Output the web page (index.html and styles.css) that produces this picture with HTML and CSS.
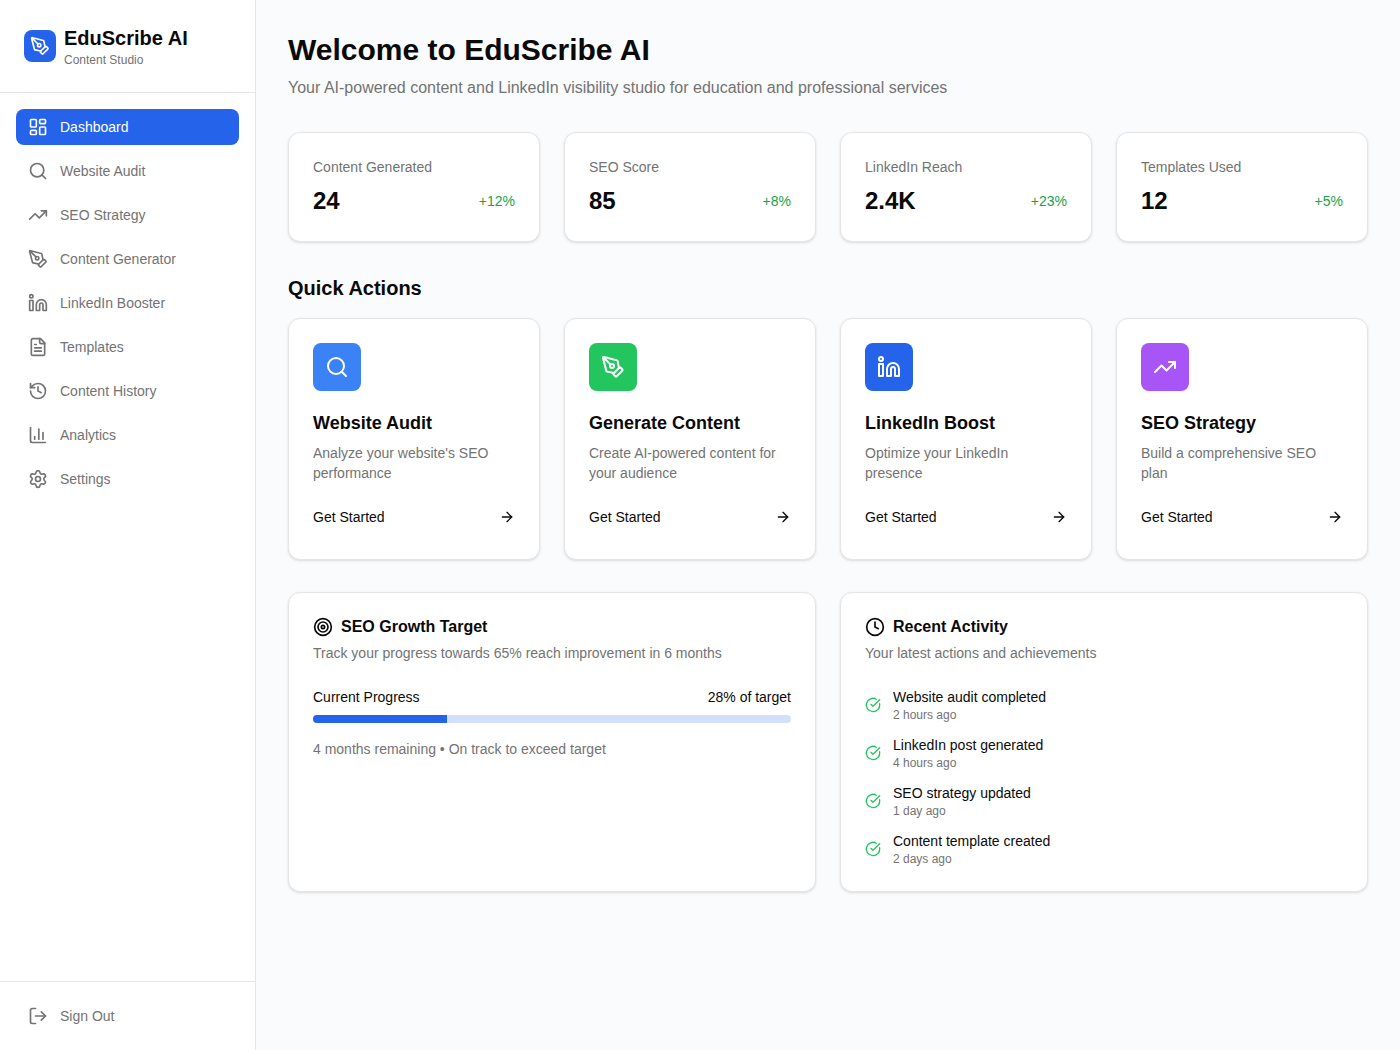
FILE: index.html
```
<!DOCTYPE html>
<html lang="en">
<head>
    <meta charset="UTF-8">
    <meta name="viewport" content="width=device-width, initial-scale=1.0">
    <title>EduScribe AI</title>
    <link rel="stylesheet" href="styles.css">
</head>
<body>

    <!-- Icons used more than once -->
    <svg class="sprite" aria-hidden="true">
        <symbol id="pen" viewBox="0 0 24 24">
            <path d="M15.707 21.293a1 1 0 0 1-1.414 0l-1.586-1.586a1 1 0 0 1 0-1.414l5.586-5.586a1 1 0 0 1 1.414 0l1.586 1.586a1 1 0 0 1 0 1.414z"/>
            <path d="m18 13-1.375-6.874a1 1 0 0 0-.746-.776L3.235 2.028a1 1 0 0 0-1.207 1.207L5.35 15.879a1 1 0 0 0 .776.746L13 18"/>
            <path d="m2.3 2.3 7.286 7.286"/>
            <circle cx="11" cy="11" r="2"/>
        </symbol>
        <symbol id="search" viewBox="0 0 24 24">
            <circle cx="11" cy="11" r="8"/>
            <path d="m21 21-4.3-4.3"/>
        </symbol>
        <symbol id="trending" viewBox="0 0 24 24">
            <path d="M16 7h6v6"/>
            <path d="m22 7-8.5 8.5-5-5L2 17"/>
        </symbol>
        <symbol id="linkedin" viewBox="0 0 24 24">
            <path d="M16 8a6 6 0 0 1 6 6v7h-4v-7a2 2 0 0 0-2-2 2 2 0 0 0-2 2v7h-4v-7a6 6 0 0 1 6-6z"/>
            <rect x="2" y="9" width="4" height="12"/>
            <circle cx="4" cy="4" r="2"/>
        </symbol>
        <symbol id="arrow" viewBox="0 0 24 24">
            <path d="M5 12h14"/>
            <path d="m12 5 7 7-7 7"/>
        </symbol>
        <symbol id="check" viewBox="0 0 24 24">
            <path d="M21.801 10A10 10 0 1 1 17 3.335"/>
            <path d="m9 11 3 3L22 4"/>
        </symbol>
    </svg>

    <div class="layout">
        <!-- Sidebar -->
        <aside class="sidebar">
            <div class="brand">
                <div class="brand-logo">
                    <svg class="icon"><use href="#pen"/></svg>
                </div>
                <div>
                    <div class="brand-name">EduScribe AI</div>
                    <div class="brand-sub">Content Studio</div>
                </div>
            </div>

            <nav class="nav">
                <a href="#" class="nav-item active">
                    <svg class="icon" viewBox="0 0 24 24">
                        <rect x="3" y="3" width="7" height="9" rx="1"/>
                        <rect x="14" y="3" width="7" height="5" rx="1"/>
                        <rect x="14" y="12" width="7" height="9" rx="1"/>
                        <rect x="3" y="16" width="7" height="5" rx="1"/>
                    </svg>
                    Dashboard
                </a>
                <a href="#" class="nav-item">
                    <svg class="icon"><use href="#search"/></svg>
                    Website Audit
                </a>
                <a href="#" class="nav-item">
                    <svg class="icon"><use href="#trending"/></svg>
                    SEO Strategy
                </a>
                <a href="#" class="nav-item">
                    <svg class="icon"><use href="#pen"/></svg>
                    Content Generator
                </a>
                <a href="#" class="nav-item">
                    <svg class="icon"><use href="#linkedin"/></svg>
                    LinkedIn Booster
                </a>
                <a href="#" class="nav-item">
                    <svg class="icon" viewBox="0 0 24 24">
                        <path d="M15 2H6a2 2 0 0 0-2 2v16a2 2 0 0 0 2 2h12a2 2 0 0 0 2-2V7Z"/>
                        <path d="M14 2v4a2 2 0 0 0 2 2h4"/>
                        <path d="M10 9H8"/>
                        <path d="M16 13H8"/>
                        <path d="M16 17H8"/>
                    </svg>
                    Templates
                </a>
                <a href="#" class="nav-item">
                    <svg class="icon" viewBox="0 0 24 24">
                        <path d="M3 12a9 9 0 1 0 9-9 9.75 9.75 0 0 0-6.74 2.74L3 8"/>
                        <path d="M3 3v5h5"/>
                        <path d="M12 7v5l4 2"/>
                    </svg>
                    Content History
                </a>
                <a href="#" class="nav-item">
                    <svg class="icon" viewBox="0 0 24 24">
                        <path d="M3 3v16a2 2 0 0 0 2 2h16"/>
                        <path d="M18 17V9"/>
                        <path d="M13 17V5"/>
                        <path d="M8 17v-3"/>
                    </svg>
                    Analytics
                </a>
                <a href="#" class="nav-item">
                    <svg class="icon" viewBox="0 0 24 24">
                        <path d="M9.671 4.136a2.34 2.34 0 0 1 4.659 0 2.34 2.34 0 0 0 3.319 1.915 2.34 2.34 0 0 1 2.33 4.033 2.34 2.34 0 0 0 0 3.831 2.34 2.34 0 0 1-2.33 4.033 2.34 2.34 0 0 0-3.319 1.915 2.34 2.34 0 0 1-4.659 0 2.34 2.34 0 0 0-3.32-1.915 2.34 2.34 0 0 1-2.33-4.033 2.34 2.34 0 0 0 0-3.831A2.34 2.34 0 0 1 6.35 6.051a2.34 2.34 0 0 0 3.319-1.915"/>
                        <circle cx="12" cy="12" r="3"/>
                    </svg>
                    Settings
                </a>
            </nav>

            <div class="sidebar-footer">
                <button type="button" class="nav-item">
                    <svg class="icon" viewBox="0 0 24 24">
                        <path d="m16 17 5-5-5-5"/>
                        <path d="M21 12H9"/>
                        <path d="M9 21H5a2 2 0 0 1-2-2V5a2 2 0 0 1 2-2h4"/>
                    </svg>
                    Sign Out
                </button>
            </div>
        </aside>

        <main class="main">
            <header>
                <h1>Welcome to EduScribe AI</h1>
                <p class="lead">Your AI-powered content and LinkedIn visibility studio for education and professional services</p>
            </header>

            <!-- Stats -->
            <section class="grid-4">
                <div class="card">
                    <p class="muted">Content Generated</p>
                    <div class="stat-row">
                        <span class="stat-value">24</span>
                        <span class="stat-change">+12%</span>
                    </div>
                </div>
                <div class="card">
                    <p class="muted">SEO Score</p>
                    <div class="stat-row">
                        <span class="stat-value">85</span>
                        <span class="stat-change">+8%</span>
                    </div>
                </div>
                <div class="card">
                    <p class="muted">LinkedIn Reach</p>
                    <div class="stat-row">
                        <span class="stat-value">2.4K</span>
                        <span class="stat-change">+23%</span>
                    </div>
                </div>
                <div class="card">
                    <p class="muted">Templates Used</p>
                    <div class="stat-row">
                        <span class="stat-value">12</span>
                        <span class="stat-change">+5%</span>
                    </div>
                </div>
            </section>

            <!-- Quick Actions -->
            <section>
                <h2>Quick Actions</h2>
                <div class="grid-4">
                    <div class="card">
                        <div class="action-icon blue">
                            <svg class="icon"><use href="#search"/></svg>
                        </div>
                        <h3 class="action-title">Website Audit</h3>
                        <p class="muted">Analyze your website's SEO performance</p>
                        <button type="button" class="btn-start">
                            Get Started
                            <svg class="icon"><use href="#arrow"/></svg>
                        </button>
                    </div>
                    <div class="card">
                        <div class="action-icon green">
                            <svg class="icon"><use href="#pen"/></svg>
                        </div>
                        <h3 class="action-title">Generate Content</h3>
                        <p class="muted">Create AI-powered content for your audience</p>
                        <button type="button" class="btn-start">
                            Get Started
                            <svg class="icon"><use href="#arrow"/></svg>
                        </button>
                    </div>
                    <div class="card">
                        <div class="action-icon navy">
                            <svg class="icon"><use href="#linkedin"/></svg>
                        </div>
                        <h3 class="action-title">LinkedIn Boost</h3>
                        <p class="muted">Optimize your LinkedIn presence</p>
                        <button type="button" class="btn-start">
                            Get Started
                            <svg class="icon"><use href="#arrow"/></svg>
                        </button>
                    </div>
                    <div class="card">
                        <div class="action-icon purple">
                            <svg class="icon"><use href="#trending"/></svg>
                        </div>
                        <h3 class="action-title">SEO Strategy</h3>
                        <p class="muted">Build a comprehensive SEO plan</p>
                        <button type="button" class="btn-start">
                            Get Started
                            <svg class="icon"><use href="#arrow"/></svg>
                        </button>
                    </div>
                </div>
            </section>

            <section class="grid-2">
                <!-- Growth target -->
                <div class="card">
                    <h3 class="panel-title">
                        <svg class="icon" viewBox="0 0 24 24">
                            <circle cx="12" cy="12" r="10"/>
                            <circle cx="12" cy="12" r="6"/>
                            <circle cx="12" cy="12" r="2"/>
                        </svg>
                        SEO Growth Target
                    </h3>
                    <p class="muted">Track your progress towards 65% reach improvement in 6 months</p>
                    <div class="panel-body">
                        <div class="progress-row">
                            <label for="growth">Current Progress</label>
                            <span>28% of target</span>
                        </div>
                        <progress id="growth" value="28" max="100"></progress>
                        <p class="muted">4 months remaining • On track to exceed target</p>
                    </div>
                </div>

                <!-- Recent activity -->
                <div class="card">
                    <h3 class="panel-title">
                        <svg class="icon" viewBox="0 0 24 24">
                            <circle cx="12" cy="12" r="10"/>
                            <path d="M12 6v6l4 2"/>
                        </svg>
                        Recent Activity
                    </h3>
                    <p class="muted">Your latest actions and achievements</p>
                    <ul class="panel-body activity">
                        <li>
                            <svg class="icon"><use href="#check"/></svg>
                            <div>
                                <p>Website audit completed</p>
                                <p class="time">2 hours ago</p>
                            </div>
                        </li>
                        <li>
                            <svg class="icon"><use href="#check"/></svg>
                            <div>
                                <p>LinkedIn post generated</p>
                                <p class="time">4 hours ago</p>
                            </div>
                        </li>
                        <li>
                            <svg class="icon"><use href="#check"/></svg>
                            <div>
                                <p>SEO strategy updated</p>
                                <p class="time">1 day ago</p>
                            </div>
                        </li>
                        <li>
                            <svg class="icon"><use href="#check"/></svg>
                            <div>
                                <p>Content template created</p>
                                <p class="time">2 days ago</p>
                            </div>
                        </li>
                    </ul>
                </div>
            </section>
        </main>
    </div>

</body>
</html>
```
FILE: styles.css
```
* {
    box-sizing: border-box;
    margin: 0;
    padding: 0;
}
body {
    font-family: "Liberation Sans", Arial, sans-serif;
    font-size: 14px;
    line-height: 20px;
    color: #0a0a0a;
    background-color: #fafbfd;
}
button {
    font: inherit;
    background: none;
    border: none;
    cursor: pointer;
}
.sprite {
    display: none;
}
.icon {
    width: 20px;
    height: 20px;
    flex-shrink: 0;
    fill: none;
    stroke: currentColor;
    stroke-width: 2;
    stroke-linecap: round;
    stroke-linejoin: round;
}
.layout {
    display: flex;
    min-height: 100vh;
}

/* Sidebar */
.sidebar {
    width: 256px;
    flex-shrink: 0;
    display: flex;
    flex-direction: column;
    background-color: #fff;
    border-right: 1px solid #e5e5e5;
}
.brand {
    display: flex;
    align-items: center;
    gap: 8px;
    padding: 24px;
    border-bottom: 1px solid #e5e5e5;
}
.brand-logo {
    width: 32px;
    height: 32px;
    display: flex;
    align-items: center;
    justify-content: center;
    color: #fff;
    background-color: #2563eb;
    border-radius: 8px;
}
.brand-name {
    font-size: 20px;
    line-height: 28px;
    font-weight: bold;
}
.brand-sub {
    font-size: 12px;
    line-height: 16px;
    color: #737373;
}
.nav {
    flex: 1;
    display: flex;
    flex-direction: column;
    gap: 8px;
    padding: 16px;
}
.nav-item {
    width: 100%;
    display: flex;
    align-items: center;
    gap: 12px;
    padding: 8px 12px;
    color: #737373;
    text-decoration: none;
    border-radius: 8px;
}
.nav-item.active {
    color: #fff;
    background-color: #2563eb;
}
.sidebar-footer {
    padding: 16px;
    border-top: 1px solid #e5e5e5;
}

/* Main */
.main {
    flex: 1;
    min-width: 0;
    display: flex;
    flex-direction: column;
    gap: 32px;
    padding: 32px;
}
h1 {
    font-size: 30px;
    line-height: 36px;
    margin-bottom: 8px;
}
h2 {
    font-size: 20px;
    line-height: 28px;
    margin-bottom: 16px;
}
.lead {
    font-size: 16px;
    line-height: 24px;
    color: #737373;
}
.muted {
    color: #737373;
}
.grid-4 {
    display: grid;
    grid-template-columns: repeat(4, 1fr);
    gap: 24px;
}
.grid-2 {
    display: grid;
    grid-template-columns: repeat(2, 1fr);
    gap: 24px;
}
.card {
    padding: 24px;
    background-color: #fff;
    border: 1px solid #e5e5e5;
    border-radius: 12px;
    box-shadow: 0 1px 3px rgba(0, 0, 0, 0.1), 0 1px 2px -1px rgba(0, 0, 0, 0.1);
}

/* Stat cards */
.stat-row {
    display: flex;
    align-items: center;
    justify-content: space-between;
    margin-top: 8px;
}
.stat-value {
    font-size: 24px;
    line-height: 32px;
    font-weight: bold;
}
.stat-change {
    color: #16a34a;
}

/* Quick action cards */
.action-icon {
    width: 48px;
    height: 48px;
    display: flex;
    align-items: center;
    justify-content: center;
    color: #fff;
    border-radius: 8px;
}
.action-icon .icon {
    width: 24px;
    height: 24px;
}
.blue {
    background-color: #3b82f6;
}
.green {
    background-color: #22c55e;
}
.navy {
    background-color: #2563eb;
}
.purple {
    background-color: #a855f7;
}
.action-title {
    font-size: 18px;
    line-height: 32px;
    margin: 16px 0 4px;
}
.btn-start {
    width: 100%;
    height: 36px;
    display: flex;
    align-items: center;
    justify-content: space-between;
    margin-top: 16px;
    color: #0a0a0a;
}
.btn-start .icon {
    width: 16px;
    height: 16px;
}

/* Bottom panels */
.panel-title {
    display: flex;
    align-items: center;
    gap: 8px;
    font-size: 16px;
    line-height: 20px;
    margin-bottom: 6px;
}
.panel-body {
    margin-top: 24px;
}
.progress-row {
    display: flex;
    justify-content: space-between;
    margin-bottom: 8px;
}
progress {
    display: block;
    width: 100%;
    height: 8px;
    margin-bottom: 16px;
    appearance: none;
    border: none;
    border-radius: 4px;
    overflow: hidden;
}
progress::-webkit-progress-bar {
    background-color: #d3e0fb;
}
progress::-webkit-progress-value {
    background-color: #2563eb;
}
.activity {
    display: flex;
    flex-direction: column;
    gap: 12px;
    list-style: none;
}
.activity li {
    display: flex;
    align-items: center;
    gap: 12px;
}
.activity .icon {
    width: 16px;
    height: 16px;
    color: #22c55e;
}
.time {
    font-size: 12px;
    line-height: 16px;
    color: #737373;
}
```
